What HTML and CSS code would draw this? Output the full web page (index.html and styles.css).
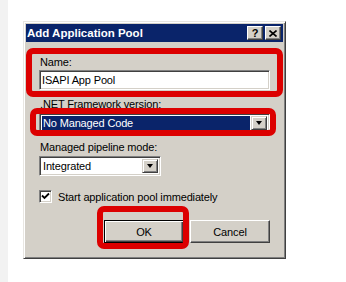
FILE: index.html
```html
<!DOCTYPE html>
<html lang="en">
<head>
    <meta charset="UTF-8">
    <meta name="viewport" content="width=device-width, initial-scale=1.0">
    <title>Add Application Pool</title>
    <link rel="stylesheet" href="styles.css">
</head>
<body>
    <div class="dialog">
        <div class="titlebar">
            <span class="title">Add Application Pool</span>
            <div class="caption-btns">
                <span class="cbtn help">?</span>
                <span class="cbtn close">
                    <svg width="8" height="7" viewBox="0 0 8 7">
                        <path d="M0.5 0.5 L7.5 6.5 M7.5 0.5 L0.5 6.5" stroke="#000" stroke-width="1.6" fill="none"/>
                    </svg>
                </span>
            </div>
        </div>

        <div class="content">
            <!-- Name -->
            <div class="field mark mark-name">
                <label>Name:</label>
                <div class="textbox">ISAPI App Pool</div>
            </div>

            <!-- Framework -->
            <div class="field">
                <label>.NET Framework version:</label>
                <div class="combo mark mark-framework">
                    <span class="combo-text selected">No Managed Code</span>
                    <span class="combo-btn"><span class="arrow"></span></span>
                </div>
            </div>

            <!-- Pipeline -->
            <div class="field">
                <label>Managed pipeline mode:</label>
                <div class="combo narrow">
                    <span class="combo-text">Integrated</span>
                    <span class="combo-btn"><span class="arrow"></span></span>
                </div>
            </div>

            <div class="check-row">
                <span class="checkbox">
                    <svg width="9" height="9" viewBox="0 0 9 9">
                        <path d="M1 3.5 L3.5 6 L8 1.5" stroke="#000" stroke-width="1.8" fill="none"/>
                    </svg>
                </span>
                <span class="check-label">Start application pool immediately</span>
            </div>

            <div class="buttons">
                <div class="btn default mark mark-ok">OK</div>
                <div class="btn">Cancel</div>
            </div>
        </div>
    </div>
</body>
</html>
```

FILE: styles.css
```css
* {
    margin: 0;
    padding: 0;
    box-sizing: border-box;
    font-family: 'Liberation Sans', Arial, sans-serif;
}

body {
    background: linear-gradient(to right, #f2f2f2 8px, #ffffff 8px);
    min-height: 100vh;
    padding: 21px 0 0 23px;
    font-size: 11px;
    letter-spacing: -0.15px;
    color: #000;
}

.dialog {
    width: 263px;
    height: 238px;
    background-color: #d4d0c8;
    border: 1px solid;
    border-color: #e8e6e2 #404040 #404040 #e8e6e2;
    box-shadow: inset 1px 1px #ffffff, inset -1px -1px #808080;
    padding: 2px;
}

.titlebar {
    height: 18px;
    background-color: #0a246a;
    display: flex;
    align-items: center;
    padding-left: 1px;
}

.title {
    color: white;
    font-weight: bold;
    font-size: 11.5px;
    letter-spacing: 0;
}

.caption-btns {
    margin-left: auto;
    margin-right: 2px;
    display: flex;
    gap: 2px;
}

.cbtn {
    width: 16px;
    height: 14px;
    background-color: #d4d0c8;
    border: 1px solid;
    border-color: #ffffff #404040 #404040 #ffffff;
    box-shadow: inset -1px -1px #808080;
    display: flex;
    justify-content: center;
    align-items: center;
    font-weight: bold;
    font-size: 11px;
    line-height: 1;
}

.content {
    padding: 13px 13px 0 13px;
}

.field + .field {
    margin-top: 7px;
}

label {
    display: block;
    line-height: 14px;
    padding-left: 1px;
    margin-bottom: 1px;
}

.field .combo {
    margin-top: 2px;
}

.textbox,
.combo {
    height: 20px;
    background-color: white;
    border: 1px solid;
    border-color: #808080 #ffffff #ffffff #808080;
    box-shadow: inset 1px 1px #404040, inset -1px -1px #d4d0c8;
}

.textbox {
    padding: 0 2px;
    line-height: 18px;
}

.combo {
    display: flex;
    padding: 2px;
}

.combo.narrow {
    width: 122px;
}

.combo-text {
    flex: 1;
    line-height: 14px;
    padding-left: 1px;
}

.combo-text.selected {
    background-color: #0a246a;
    color: white;
    margin-right: 1px;
}

.combo-btn {
    width: 16px;
    height: 14px;
    margin-top: 0;
    background-color: #d4d0c8;
    border: 1px solid;
    border-color: #d4d0c8 #404040 #404040 #d4d0c8;
    box-shadow: inset 1px 1px #ffffff, inset -1px -1px #808080;
    display: flex;
    justify-content: center;
    align-items: center;
}

.arrow {
    width: 0;
    height: 0;
    border-left: 3.5px solid transparent;
    border-right: 3.5px solid transparent;
    border-top: 4px solid #000;
}

.check-row {
    margin-top: 14px;
    display: flex;
    align-items: center;
    gap: 6px;
    height: 13px;
}

.checkbox {
    width: 13px;
    height: 13px;
    background-color: white;
    border: 1px solid;
    border-color: #808080 #ffffff #ffffff #808080;
    box-shadow: inset 1px 1px #404040, inset -1px -1px #d4d0c8;
    display: flex;
    justify-content: center;
    align-items: center;
}

.buttons {
    margin-top: 17px;
    display: flex;
    justify-content: flex-end;
    gap: 6px;
}

.btn {
    width: 80px;
    height: 23px;
    background-color: #d4d0c8;
    border: 1px solid;
    border-color: #ffffff #404040 #404040 #ffffff;
    box-shadow: inset -1px -1px #808080;
    display: flex;
    justify-content: center;
    align-items: center;
}

.btn.default {
    border-color: #000;
    box-shadow: inset 1px 1px #ffffff, inset -1px -1px #404040, inset -2px -2px #808080;
}

/* red annotation frames */
.mark {
    position: relative;
}

.mark::after {
    content: '';
    position: absolute;
    border: 6px solid #dc0000;
    border-radius: 7px;
    pointer-events: none;
}

.mark-name::after {
    inset: -7px -13px;
}

.mark-framework::after {
    top: -6px;
    right: -7px;
    bottom: -4px;
    left: -10px;
}

.mark-ok::after {
    top: -15px;
    right: -6px;
    bottom: -7px;
    left: -8px;
}
```
